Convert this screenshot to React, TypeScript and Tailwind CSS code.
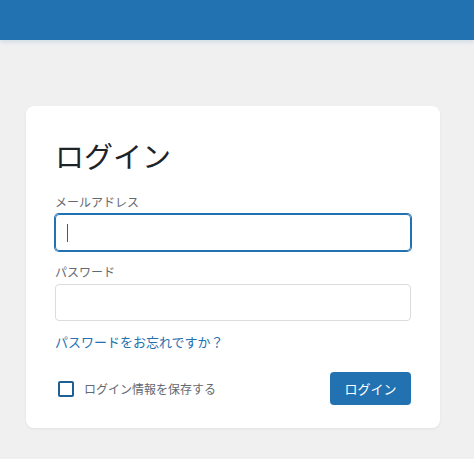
import React from "react";

export default function App() {
  const font = { fontFamily: '"Noto Sans CJK JP", "Noto Sans", sans-serif' };
  return (
    <div className="min-h-screen h-[459px] bg-[#f0f0f1] overflow-hidden" style={font}>
      <div className="h-[40px] bg-[#2271b1] shadow-[0_2px_4px_rgba(34,113,177,0.15)]" />
      <div className="pt-[66px] pl-[26px]">
        <div className="w-[414px] bg-white rounded-[8px] shadow-[0_1px_3px_rgba(0,0,0,0.06)] pt-[31px] pb-[23px] px-[29px]">
          <h1 className="text-[29px] leading-[36px] text-[#1d2327] font-normal">ログイン</h1>
          <div className="mt-[19px]">
            <label className="block text-[12px] leading-[20px] text-[#646970] mb-[2px]">メールアドレス</label>
            <div className="h-[37px] border border-[#2271b1] shadow-[0_0_0_1px_#2271b1] rounded-[4px] flex items-center pl-[11px]">
              <div className="w-px h-[18px] bg-[#555]" />
            </div>
          </div>
          <div className="mt-[11px]">
            <label className="block text-[12px] leading-[20px] text-[#646970] mb-[2px]">パスワード</label>
            <div className="h-[37px] border border-[#dcdcde] rounded-[4px]" />
          </div>
          <div className="mt-[11px] text-[13px] leading-[20px] text-[#2271b1]">パスワードをお忘れですか？</div>
          <div className="mt-[20px] flex items-center justify-between">
            <div className="flex items-center pl-[3px]">
              <div className="w-[16px] h-[16px] border-2 border-[#1e5f94] rounded-[2px]" />
              <span className="ml-[10px] text-[12px] leading-[20px] text-[#646970]">ログイン情報を保存する</span>
            </div>
            <button className="w-[81px] h-[33px] bg-[#2271b1] rounded-[4px] text-white text-[13px] leading-[20px]">ログイン</button>
          </div>
        </div>
      </div>
    </div>
  );
}
